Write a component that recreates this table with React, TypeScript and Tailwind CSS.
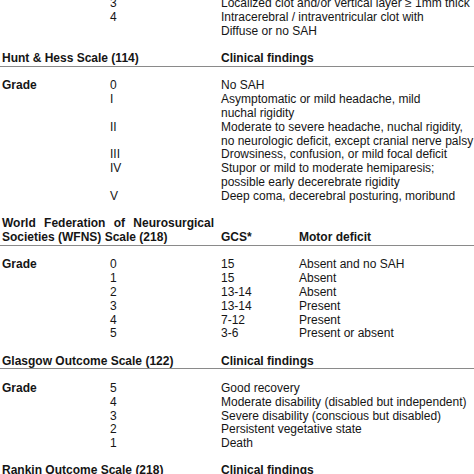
import React from "react";

const LH = "leading-[13.85px]";

function Row({ a = "", b = "", c = "", d }: { a?: string; b?: string; c?: string; d?: string }) {
  return (
    <div className={`flex ${LH} whitespace-nowrap`}>
      <div className="w-[110px] shrink-0 pl-[2px] font-bold">{a}</div>
      <div className="w-[111px] shrink-0">{b}</div>
      {d === undefined ? (
        <div>{c}</div>
      ) : (
        <>
          <div className="w-[78px] shrink-0">{c}</div>
          <div>{d}</div>
        </>
      )}
    </div>
  );
}

function Header({ left, right, right2 }: { left: React.ReactNode; right: string; right2?: string }) {
  return (
    <div className="mt-[13.3px] border-b-[1.5px] border-[#8a8a8a] font-bold">
      <div className={`flex items-end ${LH} whitespace-nowrap`}>
        <div className="w-[221px] shrink-0 pl-[2px]">{left}</div>
        {right2 === undefined ? (
          <div>{right}</div>
        ) : (
          <>
            <div className="w-[78px] shrink-0">{right}</div>
            <div>{right2}</div>
          </>
        )}
      </div>
    </div>
  );
}

export default function App() {
  return (
    <div
      className="w-[474px] h-[474px] overflow-hidden bg-white text-[12px] text-[#151515]"
      style={{ fontFamily: '"Liberation Sans", Arial, sans-serif' }}
    >
      <div className="-mt-[3px]">
        <Row b="3" c="Localized clot and/or vertical layer ≥ 1mm thick" />
        <Row b="4" c="Intracerebral / intraventricular clot with" />
        <Row c="Diffuse or no SAH" />

        <Header left="Hunt & Hess Scale (114)" right="Clinical findings" />
        <div className="mt-[12.5px]">
          <Row a="Grade" b="0" c="No SAH" />
          <Row b="I" c="Asymptomatic or mild headache, mild" />
          <Row c="nuchal rigidity" />
          <Row b="II" c="Moderate to severe headache, nuchal rigidity," />
          <Row c="no neurologic deficit, except cranial nerve palsy" />
          <Row b="III" c="Drowsiness, confusion, or mild focal deficit" />
          <Row b="IV" c="Stupor or mild to moderate hemiparesis;" />
          <Row c="possible early decerebrate rigidity" />
          <Row b="V" c="Deep coma, decerebral posturing, moribund" />
        </div>

        <Header
          left={
            <div className="w-[212px]">
              <div className="flex justify-between">
                <span>World</span>
                <span>Federation</span>
                <span>of</span>
                <span>Neurosurgical</span>
              </div>
              <div>Societies (WFNS) Scale (218)</div>
            </div>
          }
          right="GCS*"
          right2="Motor deficit"
        />
        <div className="mt-[12.5px]">
          <Row a="Grade" b="0" c="15" d="Absent and no SAH" />
          <Row b="1" c="15" d="Absent" />
          <Row b="2" c="13-14" d="Absent" />
          <Row b="3" c="13-14" d="Present" />
          <Row b="4" c="7-12" d="Present" />
          <Row b="5" c="3-6" d="Present or absent" />
        </div>

        <Header left="Glasgow Outcome Scale (122)" right="Clinical findings" />
        <div className="mt-[12.5px]">
          <Row a="Grade" b="5" c="Good recovery" />
          <Row b="4" c="Moderate disability (disabled but independent)" />
          <Row b="3" c="Severe disability (conscious but disabled)" />
          <Row b="2" c="Persistent vegetative state" />
          <Row b="1" c="Death" />
        </div>

        <Header left="Rankin Outcome Scale (218)" right="Clinical findings" />
      </div>
    </div>
  );
}
